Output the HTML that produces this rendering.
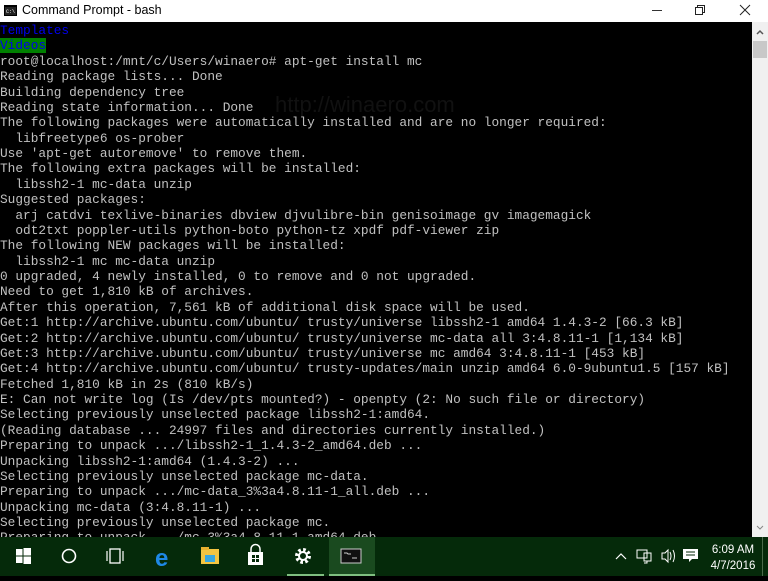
<!DOCTYPE html>
<html><head><meta charset="utf-8"><style>
*{margin:0;padding:0;box-sizing:border-box}
body{width:768px;height:576px;overflow:hidden;background:#000;position:relative;font-family:"Liberation Sans",sans-serif}
#title{position:absolute;left:0;top:0;width:768px;height:22px;background:#fff;color:#000;font-size:12px}
#title .t{position:absolute;left:22px;top:3px;font-size:12.5px}
#term{position:absolute;left:0;top:22px;width:752px;height:515px;overflow:hidden;background:#000}
pre{font-family:"Liberation Mono",monospace;font-size:12.8px;line-height:15.375px;color:#c0c0c0;margin:0;white-space:pre;position:relative;top:1px}
#sb{position:absolute;left:752px;top:22px;width:16px;height:515px;background:#f0f0f0}
#tb{position:absolute;left:0;top:537px;width:768px;height:39px;background:#052a0a}
.wm{position:absolute;left:275px;top:70px;font-size:22px;color:#111;font-family:"Liberation Sans",sans-serif}
</style></head><body>
<div id="title">
<svg style="position:absolute;left:4px;top:5px" width="13" height="11"><rect width="13" height="11" fill="#000"/><rect x="1" y="2" width="11" height="8" fill="#222"/><text x="2" y="8" font-size="5" fill="#fff" font-family="Liberation Mono">C:\</text></svg>
<span class="t">Command Prompt - bash</span>
<svg style="position:absolute;left:620px;top:0" width="148" height="22">
<line x1="32" y1="10.5" x2="42" y2="10.5" stroke="#333" stroke-width="1"/>
<rect x="75.5" y="7.5" width="7" height="7" fill="none" stroke="#222"/><path d="M77.5 7.5V5.5H84.5V12.5H82.5" fill="none" stroke="#222"/>
<path d="M120 5L130 15M130 5L120 15" stroke="#222" stroke-width="1"/>
</svg>
</div>
<div id="term"><div class="wm">http://winaero.com</div><pre><span style="color:#0000ee">Templates</span>
<span style="color:#0000ee;background:#008000">Videos</span>
root@localhost:/mnt/c/Users/winaero# apt-get install mc
Reading package lists... Done
Building dependency tree
Reading state information... Done
The following packages were automatically installed and are no longer required:
  libfreetype6 os-prober
Use 'apt-get autoremove' to remove them.
The following extra packages will be installed:
  libssh2-1 mc-data unzip
Suggested packages:
  arj catdvi texlive-binaries dbview djvulibre-bin genisoimage gv imagemagick
  odt2txt poppler-utils python-boto python-tz xpdf pdf-viewer zip
The following NEW packages will be installed:
  libssh2-1 mc mc-data unzip
0 upgraded, 4 newly installed, 0 to remove and 0 not upgraded.
Need to get 1,810 kB of archives.
After this operation, 7,561 kB of additional disk space will be used.
Get:1 http://archive.ubuntu.com/ubuntu/ trusty/universe libssh2-1 amd64 1.4.3-2 [66.3 kB]
Get:2 http://archive.ubuntu.com/ubuntu/ trusty/universe mc-data all 3:4.8.11-1 [1,134 kB]
Get:3 http://archive.ubuntu.com/ubuntu/ trusty/universe mc amd64 3:4.8.11-1 [453 kB]
Get:4 http://archive.ubuntu.com/ubuntu/ trusty-updates/main unzip amd64 6.0-9ubuntu1.5 [157 kB]
Fetched 1,810 kB in 2s (810 kB/s)
E: Can not write log (Is /dev/pts mounted?) - openpty (2: No such file or directory)
Selecting previously unselected package libssh2-1:amd64.
(Reading database ... 24997 files and directories currently installed.)
Preparing to unpack .../libssh2-1_1.4.3-2_amd64.deb ...
Unpacking libssh2-1:amd64 (1.4.3-2) ...
Selecting previously unselected package mc-data.
Preparing to unpack .../mc-data_3%3a4.8.11-1_all.deb ...
Unpacking mc-data (3:4.8.11-1) ...
Selecting previously unselected package mc.
Preparing to unpack .../mc_3%3a4.8.11-1_amd64.deb ...</pre></div>
<div id="sb">
<svg width="16" height="515"><path d="M5 12L8 9L11 12" fill="none" stroke="#555" stroke-width="1.5"/><rect x="1" y="19" width="14" height="17" fill="#c8c8c8"/><path d="M5 504L8 507L11 504" fill="none" stroke="#888" stroke-width="1"/></svg>
</div>
<div id="tb">
<svg width="768" height="39">
<g fill="#fff"><rect x="16" y="12" width="6.5" height="6.5"/><rect x="23.5" y="11" width="7.5" height="7.5"/><rect x="16" y="19.5" width="6.5" height="6.5"/><rect x="23.5" y="19.5" width="7.5" height="7.5"/></g>
<circle cx="69" cy="19" r="6.5" fill="none" stroke="#fff" stroke-width="1.6"/>
<rect x="110" y="12" width="10" height="14" fill="none" stroke="#fff" stroke-width="1.3"/><path d="M107 14V24M123 14V24" stroke="#fff" stroke-width="1.2"/>
<text x="155" y="29" font-size="24" font-weight="bold" fill="#1e88e5" font-family="Liberation Sans">e</text>
<rect x="201" y="12" width="18" height="15" fill="#f4c542"/><rect x="201" y="10" width="8" height="3" fill="#e8b030"/><rect x="205" y="18" width="10" height="7" fill="#39a7e0"/>
<path d="M248 15h15v13h-15z" fill="#fff"/><path d="M251 15v-3a4 4 0 0 1 9 0v3" fill="none" stroke="#fff" stroke-width="1.5"/><g fill="#052a0a"><rect x="252" y="18" width="3" height="3"/><rect x="256" y="18" width="3" height="3"/><rect x="252" y="22" width="3" height="3"/><rect x="256" y="22" width="3" height="3"/></g>
<circle cx="303" cy="19" r="6" fill="none" stroke="#fff" stroke-width="4" stroke-dasharray="2.5 2.2"/><circle cx="303" cy="19" r="4" fill="none" stroke="#fff" stroke-width="2"/>
<rect x="287" y="37" width="37" height="2" fill="#7fbf80"/>
<rect x="329" y="0" width="46" height="39" fill="#1a4a1f"/><rect x="329" y="37" width="46" height="2" fill="#7fbf80"/>
<rect x="341" y="12" width="20" height="14" fill="#111" stroke="#ccc" stroke-width="1"/><path d="M344 16h3l1 1h3M352 21h5" stroke="#ccc" stroke-width="1"/>
<path d="M616 22L621 17L626 22" fill="none" stroke="#fff" stroke-width="1.2"/>
<rect x="637" y="13" width="10" height="8" fill="none" stroke="#fff"/><path d="M644 16h7v8h-7zM647 24v2h-3" fill="none" stroke="#fff"/>
<path d="M662 16h3l3-3v12l-3-3h-3z" fill="none" stroke="#fff"/><path d="M670 15q2 4 0 8M673 13q3 6 0 12" fill="none" stroke="#fff"/>
<path d="M683 12h15v10h-6l-3 3v-3h-6z" fill="#fff"/><path d="M686 15h9M686 18h9" stroke="#052a0a"/>
<text x="733" y="16" font-size="11.5" fill="#fff" text-anchor="middle" font-family="Liberation Sans">6:09 AM</text>
<text x="733" y="32" font-size="11.5" fill="#fff" text-anchor="middle" font-family="Liberation Sans">4/7/2016</text>
<rect x="762" y="0" width="1" height="39" fill="#4a6a4a"/>
</svg>
</div>
</body></html>
